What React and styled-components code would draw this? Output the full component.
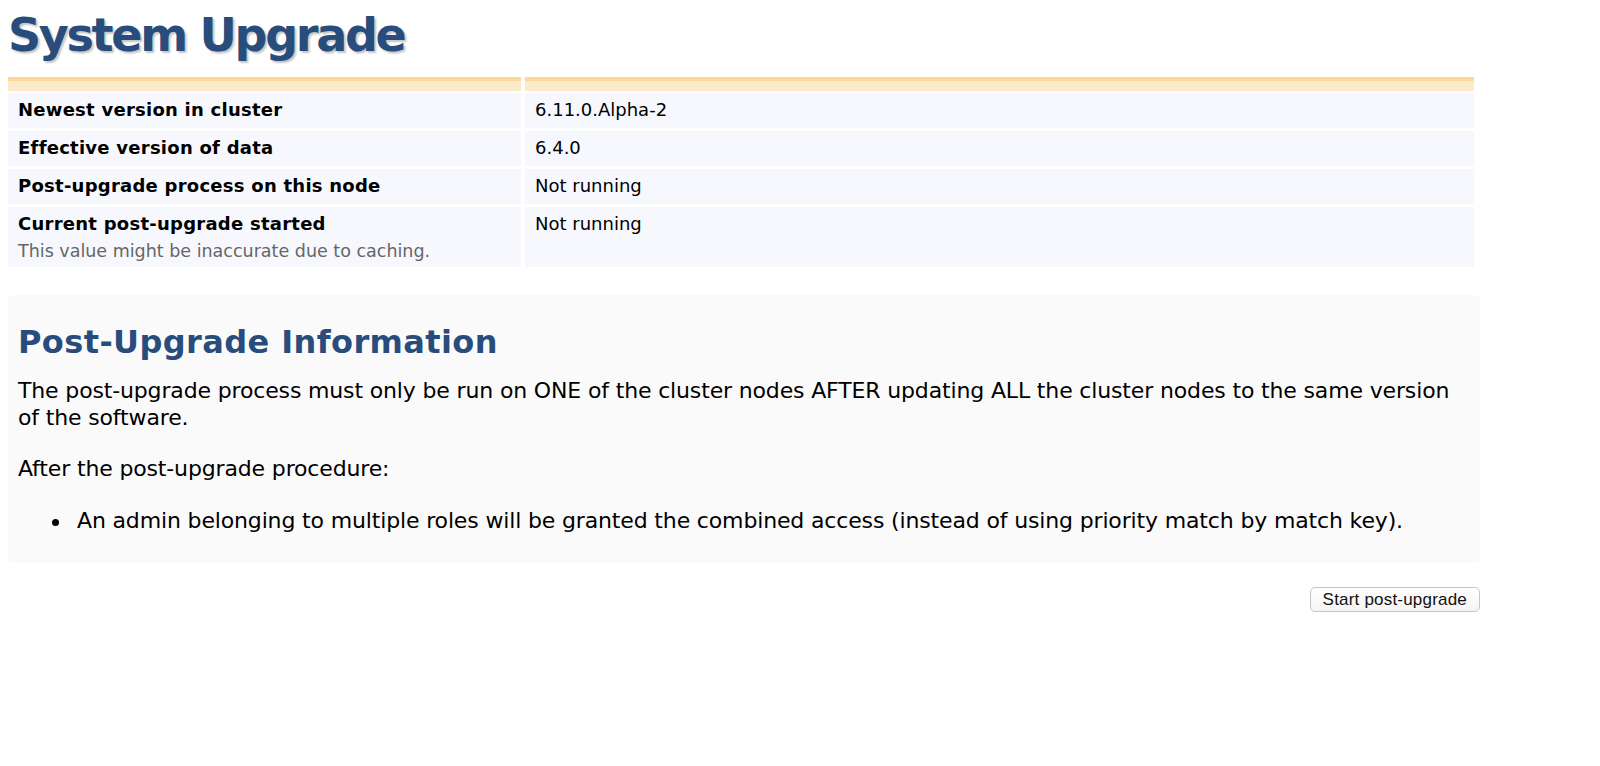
import React from 'react';
import styled, { createGlobalStyle } from 'styled-components';

const GlobalStyle = createGlobalStyle`
  body {
    margin: 8px;
    background: #ffffff;
    font-family: Verdana, "DejaVu Sans", sans-serif;
    color: #000;
  }
`;

const Page = styled.div`
  width: 1472px;
`;

const Title = styled.h1`
  margin: 0 0 15px;
  font-size: 46px;
  letter-spacing: -2.3px;
  font-weight: bold;
  color: #284d7d;
  text-shadow: 2px 2px 2px #c4c4c4;
  line-height: 54px;
`;

const InfoTable = styled.div`
  display: grid;
  grid-template-columns: 513px 949px;
  column-gap: 4px;
  row-gap: 3px;
`;

const HeadCell = styled.div`
  height: 10px;
  background: #fdeaca;
  border-top: 4px solid #fcd996;
  margin-bottom: -1px;
`;

const Cell = styled.div`
  background: #f6f8fd;
  padding: 6px 10px ${p => (p.$tall ? '5px' : '7px')};
  font-size: 18px;
  line-height: 22px;
  font-weight: ${p => (p.$label ? 'bold' : 'normal')};
  letter-spacing: ${p => (p.$label ? '0.25px' : '0')};
`;

const Note = styled.div`
  margin-top: 5px;
  font-weight: normal;
  font-size: 17.5px;
  line-height: 22px;
  letter-spacing: 0;
  color: #666;
`;

const InfoBox = styled.section`
  margin-top: 28px;
  background: #fafafa;
  border-radius: 5px;
  padding: 28px 10px 29px;
`;

const SubTitle = styled.h2`
  margin: 0 0 17px;
  font-size: 32px;
  line-height: 38px;
  letter-spacing: 0.4px;
  color: #284d7d;
  font-weight: bold;
`;

const Text = styled.p`
  margin: 0 0 25px;
  font-size: 22px;
  line-height: 26.5px;
  letter-spacing: -0.15px;
`;

const List = styled.ul`
  margin: 0;
  padding-left: 59px;
  list-style: none;
  font-size: 22px;
  line-height: 26.5px;
  letter-spacing: -0.15px;
`;

const Item = styled.li`
  position: relative;

  &::before {
    content: '';
    position: absolute;
    left: -25px;
    top: 11px;
    width: 7px;
    height: 7px;
    border-radius: 50%;
    background: #000;
  }
`;

const Actions = styled.div`
  display: flex;
  justify-content: flex-end;
  margin-top: 24px;
`;

const Button = styled.button`
  font-family: "Liberation Sans", Arial, sans-serif;
  font-size: 17px;
  letter-spacing: 0.2px;
  padding: 0 12px;
  height: 25px;
  line-height: 23px;
  background: linear-gradient(#ffffff, #f4f4f4);
  border: 1px solid #c6c6c6;
  border-radius: 5px;
  color: #111;
`;

const rows = [
  { label: 'Newest version in cluster', value: '6.11.0.Alpha-2' },
  { label: 'Effective version of data', value: '6.4.0' },
  { label: 'Post-upgrade process on this node', value: 'Not running' },
  {
    label: 'Current post-upgrade started',
    note: 'This value might be inaccurate due to caching.',
    value: 'Not running',
  },
];

export default function App() {
  return (
    <Page>
      <GlobalStyle />
      <Title>System Upgrade</Title>
      <InfoTable>
        <HeadCell />
        <HeadCell />
        {rows.map(r => (
          <React.Fragment key={r.label}>
            <Cell $label $tall={!!r.note}>
              {r.label}
              {r.note && <Note>{r.note}</Note>}
            </Cell>
            <Cell $tall={!!r.note}>{r.value}</Cell>
          </React.Fragment>
        ))}
      </InfoTable>
      <InfoBox>
        <SubTitle>Post-Upgrade Information</SubTitle>
        <Text>
          The post-upgrade process must only be run on ONE of the cluster nodes AFTER updating ALL the
          cluster nodes to the same version of the software.
        </Text>
        <Text>After the post-upgrade procedure:</Text>
        <List>
          <Item>
            An admin belonging to multiple roles will be granted the combined access (instead of using
            priority match by match key).
          </Item>
        </List>
      </InfoBox>
      <Actions>
        <Button>Start post-upgrade</Button>
      </Actions>
    </Page>
  );
}
